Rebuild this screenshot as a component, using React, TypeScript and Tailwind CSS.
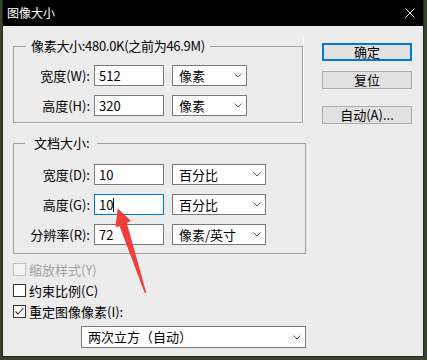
import React from "react";

const font = "font-['Noto_Sans_CJK_SC','Noto_Sans',sans-serif]";

function Chevron() {
  return (
    <svg width="8" height="5" viewBox="0 0 8 5" className="shrink-0">
      <path d="M0.5 0.5 L4 4 L7.5 0.5" stroke="#5a5a5a" strokeWidth="1" fill="none" />
    </svg>
  );
}

function Select({ text, className }: { text: string; className: string }) {
  return (
    <div
      className={`flex items-center justify-between bg-white border border-[#7a7a7a] pl-[6px] pr-[4px] text-[13px] text-black ${className}`}
    >
      <span>{text}</span>
      <Chevron />
    </div>
  );
}

function Row({
  label,
  value,
  unit,
  selectW,
  focused,
  first,
}: {
  label: string;
  value: string;
  unit: string;
  selectW: string;
  focused?: boolean;
  first?: boolean;
}) {
  return (
    <div className={`flex items-center h-[21px] ${first ? "" : "mt-[9px]"}`}>
      <div className="w-[76px] mr-[4px] text-right text-[13px] text-black whitespace-nowrap">{label}</div>
      <div
        className={`w-[70px] h-[21px] flex items-center bg-white pl-[4px] text-[13px] text-black border ${
          focused ? "border-[#0078d7]" : "border-[#7a7a7a]"
        }`}
      >
        <span>{value}</span>
        {focused && <span className="inline-block w-px h-[14px] bg-black" />}
      </div>
      <Select text={unit} className={`ml-[8px] h-[21px] ${selectW}`} />
    </div>
  );
}

function Check({ label, checked, disabled }: { label: string; checked?: boolean; disabled?: boolean }) {
  return (
    <div className="flex items-center h-[21px]">
      <div
        className={`w-[13px] h-[13px] flex items-center justify-center border ${
          disabled ? "border-[#c2c2c2] bg-[#f4f4f4]" : "border-[#333333] bg-white"
        }`}
      >
        {checked && (
          <svg width="11" height="11" viewBox="0 0 11 11">
            <path d="M1.5 5.5 L4 8 L9.5 2" stroke="#333" strokeWidth="1.1" fill="none" />
          </svg>
        )}
      </div>
      <span className={`ml-[3px] text-[13px] ${disabled ? "text-[#a3a3a3]" : "text-black"}`}>{label}</span>
    </div>
  );
}

function Button({ label, focused, className }: { label: string; focused?: boolean; className: string }) {
  return (
    <div
      className={`w-[90px] h-[18px] flex items-center justify-center bg-[#e1e1e1] text-[13px] text-black ${
        focused ? "border-2 border-[#0078d7]" : "border border-[#adadad]"
      } ${className}`}
    >
      {label}
    </div>
  );
}

export default function App() {
  return (
    <div className={`relative w-[427px] h-[360px] bg-[#38432c] pl-[2px] overflow-hidden ${font}`}>
      <div className="w-[422px] h-[357px] flex flex-col bg-[#ececec] border-x border-b border-[#262626]">
        <div className="h-[26px] shrink-0 bg-black flex items-center justify-between pl-[4px] pr-[8px]">
          <span className="text-white text-[12px]">图像大小</span>
          <svg width="10" height="10" viewBox="0 0 10 10">
            <path d="M0.5 0.5 L9.5 9.5 M9.5 0.5 L0.5 9.5" stroke="#fff" strokeWidth="1" />
          </svg>
        </div>

        <div className="flex pl-[10px]">
          <div className="w-[293px] flex flex-col">
            <div className="mt-[11px] w-[291px] border-r border-b border-white">
              <fieldset className="w-[290px] border border-[#a0a0a0] pb-[6px]">
                <legend className="ml-[12px] px-[5px] text-[13px] tracking-[-0.3px] leading-[18px] text-black">
                  像素大小:480.0K(之前为46.9M)
                </legend>
                <div className="mt-[10px]">
                  <Row first label="宽度(W):" value="512" unit="像素" selectW="w-[75px]" />
                  <Row label="高度(H):" value="320" unit="像素" selectW="w-[75px]" />
                </div>
              </fieldset>
            </div>

            <fieldset className="mt-[10px] w-[293px] border border-[#a0a0a0] pb-[8px]">
              <legend className="ml-[11px] pl-[9px] pr-[7px] text-[13px] leading-[18px] text-black">文档大小:</legend>
              <div className="mt-[12px]">
                <Row first label="宽度(D):" value="10" unit="百分比" selectW="w-[94px]" />
                <Row focused label="高度(G):" value="10" unit="百分比" selectW="w-[94px]" />
                <Row label="分辨率(R):" value="72" unit="像素/英寸" selectW="w-[94px]" />
              </div>
            </fieldset>

            <div className="mt-[5px]">
              <Check disabled label="缩放样式(Y)" />
              <Check label="约束比例(C)" />
              <Check checked label="重定图像像素(I):" />
            </div>

            <Select text="两次立方（自动）" className="mt-[4px] ml-[68px] w-[225px] h-[22px]" />
          </div>

          <div className="ml-[16px] flex flex-col">
            <Button focused label="确定" className="mt-[17px]" />
            <Button label="复位" className="mt-[10px]" />
            <Button label="自动(A)..." className="mt-[17px]" />
          </div>
        </div>
      </div>

      <svg className="absolute left-0 top-0 pointer-events-none" width="427" height="360" viewBox="0 0 427 360">
        <polygon
          points="117.7,208.3 131,221 126.8,223 146.2,292.5 144.8,293.2 119.6,226.3 115.5,227"
          fill="#f23d3d"
        />
      </svg>
    </div>
  );
}
